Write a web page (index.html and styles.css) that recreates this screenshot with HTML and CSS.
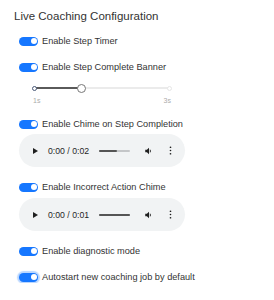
FILE: index.html
```html
<!DOCTYPE html>
<html lang="en">
<head>
	<meta charset="UTF-8">
	<title>Live Coaching Configuration</title>

	<link rel="stylesheet" href="styles.css">
</head>
<body>

<div class="panel">
	<div class="title">Live Coaching Configuration</div>

	<label class="row row-first">
		<span class="switch"><span class="knob"></span></span>
		<span class="label">Enable Step Timer</span>
	</label>

	<label class="row">
		<span class="switch"><span class="knob"></span></span>
		<span class="label">Enable Step Complete Banner</span>
	</label>

	<div class="slider">
		<div class="track">
			<div class="track-fill" style="width: 35%"></div>
			<div class="dot dot-start"></div>
			<div class="dot dot-end"></div>
			<div class="thumb" style="left: 35%"></div>
		</div>
		<div class="marks">
			<span>1s</span>
			<span>3s</span>
		</div>
	</div>

	<label class="row row-after-slider">
		<span class="switch"><span class="knob"></span></span>
		<span class="label">Enable Chime on Step Completion</span>
	</label>

	<div class="player">
		<span class="play"></span>
		<span class="time">0:00 / 0:02</span>
		<span class="bar"><span class="bar-fill" style="width: 58%"></span></span>
		<svg class="volume" viewBox="0 0 24 24"><path d="M3 9v6h4l5 5V4L7 9H3zm13.5 3c0-1.770-1.02-3.29-2.5-4.03v8.05c1.48-.73 2.5-2.25 2.5-4.02z"/></svg>
		<svg class="more" viewBox="0 0 4 14"><circle cx="2" cy="2" r="1.3"/><circle cx="2" cy="7" r="1.3"/><circle cx="2" cy="12" r="1.3"/></svg>
	</div>

	<label class="row">
		<span class="switch"><span class="knob"></span></span>
		<span class="label">Enable Incorrect Action Chime</span>
	</label>

	<div class="player player-second">
		<span class="play"></span>
		<span class="time">0:00 / 0:01</span>
		<span class="bar"><span class="bar-fill" style="width: 100%"></span></span>
		<svg class="volume" viewBox="0 0 24 24"><path d="M3 9v6h4l5 5V4L7 9H3zm13.5 3c0-1.770-1.02-3.29-2.5-4.03v8.05c1.48-.73 2.5-2.25 2.5-4.02z"/></svg>
		<svg class="more" viewBox="0 0 4 14"><circle cx="2" cy="2" r="1.3"/><circle cx="2" cy="7" r="1.3"/><circle cx="2" cy="12" r="1.3"/></svg>
	</div>

	<label class="row">
		<span class="switch"><span class="knob"></span></span>
		<span class="label">Enable diagnostic mode</span>
	</label>

	<label class="row">
		<span class="switch switch-focus"><span class="knob"></span></span>
		<span class="label">Autostart new coaching job by default</span>
	</label>
</div>

</body>
</html>
```

FILE: styles.css
```css
html, body {
	margin: 0;
	background: #fff;
	font-family: "Liberation Sans", Arial, sans-serif;
	color: #333;
}

.panel {
	display: flex;
	flex-direction: column;
	align-items: flex-start;
	padding: 9px 0 0 14px;
}

.title {
	font-size: 11.5px;
	line-height: 14px;
	color: #333;
}

.row {
	display: flex;
	align-items: center;
	gap: 4px;
	height: 12px;
	margin-top: 14px;
	margin-left: 5px;
	font-size: 9.2px;
	color: #333;
}

.row-first {
	margin-top: 12px;
}

.row-after-slider {
	margin-top: 13px;
}

.switch {
	position: relative;
	display: inline-block;
	width: 19px;
	height: 9px;
	border-radius: 5px;
	background: #1677ff;
	flex: none;
}

.switch-focus {
	box-shadow: 0 0 1px 2px rgba(22, 119, 255, 0.3);
}

.knob {
	position: absolute;
	top: 1.5px;
	right: 1.5px;
	width: 6px;
	height: 6px;
	border-radius: 50%;
	background: #fff;
}

.slider {
	display: flex;
	flex-direction: column;
	gap: 8px;
	margin: 10px 0 0 19px;
	padding-top: 4px;
	width: 138px;
}

.track {
	position: relative;
	height: 2px;
	background: #ebebeb;
	border-radius: 1px;
}

.track-fill {
	height: 100%;
	background: #5a5a5a;
	border-radius: 1px;
}

.dot {
	position: absolute;
	top: -1.5px;
	width: 3px;
	height: 3px;
	border-radius: 50%;
	background: #fff;
}

.dot-start {
	left: -1px;
	border: 1px solid #4a5a78;
}

.dot-end {
	right: -1px;
	border: 1px solid #e6e6e6;
}

.thumb {
	position: absolute;
	top: -3.5px;
	width: 7px;
	height: 7px;
	margin-left: -4px;
	border-radius: 50%;
	background: #fff;
	border: 1px solid #777;
}

.marks {
	display: flex;
	justify-content: space-between;
	font-size: 7px;
	line-height: 8px;
	color: #aaa;
}

.player {
	display: flex;
	align-items: center;
	width: 166px;
	height: 33px;
	margin: 4px 0 0 5px;
	padding-left: 14px;
	box-sizing: border-box;
	border-radius: 17px;
	background: #f1f3f4;
	color: #1f1f1f;
}

.player-second {
	margin-top: 5px;
}

.play {
	width: 0;
	height: 0;
	border-top: 3.5px solid transparent;
	border-bottom: 3.5px solid transparent;
	border-left: 5.5px solid #1f1f1f;
}

.time {
	margin-left: 10px;
	font-size: 8.7px;
}

.bar {
	position: relative;
	margin-left: 10px;
	width: 31px;
	height: 2px;
	background: #c4c6c8;
	border-radius: 1px;
}

.bar-fill {
	display: block;
	height: 100%;
	background: #555;
	border-radius: 1px;
}

.volume {
	margin-left: 14px;
	width: 10px;
	height: 10px;
	fill: #1f1f1f;
}

.more {
	margin-left: 15px;
	width: 3px;
	height: 9px;
	fill: #1f1f1f;
}
```
